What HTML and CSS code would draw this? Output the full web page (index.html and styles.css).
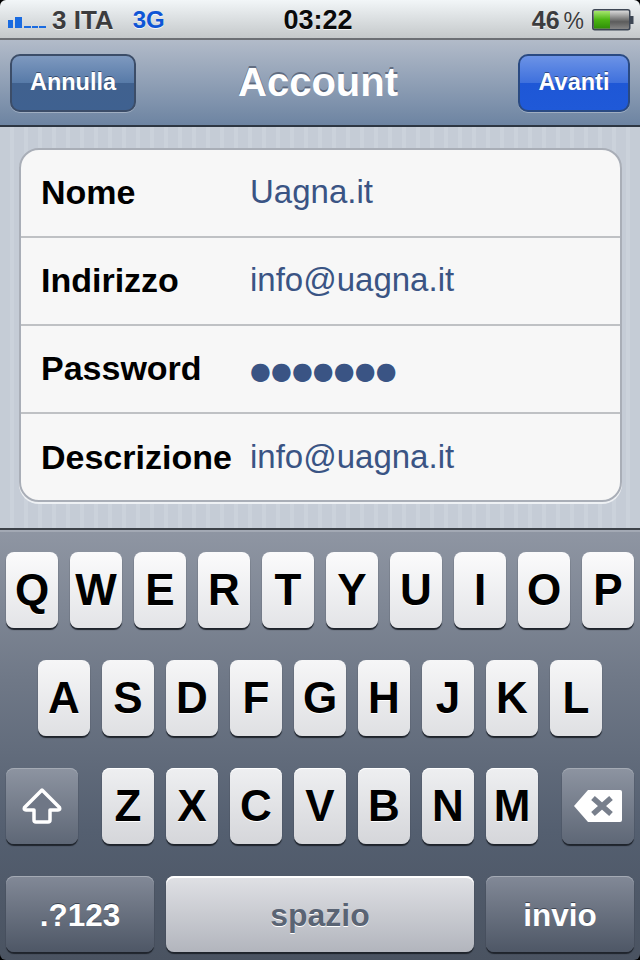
FILE: index.html
```html
<!DOCTYPE html>
<html lang="it">
<head>
    <meta charset="UTF-8">
    <meta name="viewport" content="width=device-width, initial-scale=1.0">
    <title>Account</title>
    <link rel="stylesheet" href="styles.css">
</head>
<body>
    <div class="screen">
        <div class="status-bar">
            <div class="status-left">
                <svg class="signal" width="40" height="20" viewBox="0 0 40 20">
                    <rect x="0" y="10" width="5" height="8" fill="#1a6be0"/>
                    <rect x="7" y="7" width="7" height="11" fill="#1a6be0"/>
                    <rect x="16" y="16" width="7" height="2" fill="#1a6be0"/>
                    <rect x="24" y="16" width="6" height="2" fill="#1a6be0"/>
                    <rect x="31" y="16" width="7" height="2" fill="#1a6be0"/>
                </svg>
                <span class="carrier">3 ITA</span>
                <span class="network">3G</span>
            </div>
            <div class="status-time">03:22</div>
            <div class="status-right">
                <span class="percent">46<span class="percent-sign">%</span></span>
                <svg class="battery" width="42" height="22" viewBox="0 0 42 22">
                    <defs>
                        <linearGradient id="charge" x1="0" y1="0" x2="0" y2="1">
                            <stop offset="0" stop-color="#a6e66e"/>
                            <stop offset="0.5" stop-color="#4bb512"/>
                            <stop offset="1" stop-color="#2f8f08"/>
                        </linearGradient>
                        <linearGradient id="empty" x1="0" y1="0" x2="0" y2="1">
                            <stop offset="0" stop-color="#e4e4e4"/>
                            <stop offset="0.6" stop-color="#5c5c5c"/>
                            <stop offset="1" stop-color="#8a8a8a"/>
                        </linearGradient>
                    </defs>
                    <rect x="0.75" y="0.75" width="37" height="20" rx="2" fill="url(#empty)" stroke="#3d4654" stroke-width="1.5"/>
                    <rect x="2" y="2" width="16" height="17.5" fill="url(#charge)"/>
                    <rect x="38" y="7" width="3.5" height="8" fill="#3d4654"/>
                </svg>
            </div>
        </div>

        <div class="nav-bar">
            <div class="nav-button cancel">Annulla</div>
            <div class="nav-title">Account</div>
            <div class="nav-button next">Avanti</div>
        </div>

        <div class="content">
            <div class="form-card">
                <div class="form-row">
                    <div class="form-label">Nome</div>
                    <div class="form-value">Uagna.it</div>
                </div>
                <div class="form-row">
                    <div class="form-label">Indirizzo</div>
                    <div class="form-value">info@uagna.it</div>
                </div>
                <div class="form-row">
                    <div class="form-label">Password</div>
                    <div class="form-value dots">●●●●●●●</div>
                </div>
                <div class="form-row">
                    <div class="form-label">Descrizione</div>
                    <div class="form-value">info@uagna.it</div>
                </div>
            </div>
        </div>

        <div class="keyboard">
            <div class="key-row">
                <div class="key">Q</div>
                <div class="key">W</div>
                <div class="key">E</div>
                <div class="key">R</div>
                <div class="key">T</div>
                <div class="key">Y</div>
                <div class="key">U</div>
                <div class="key">I</div>
                <div class="key">O</div>
                <div class="key">P</div>
            </div>
            <div class="key-row">
                <div class="key">A</div>
                <div class="key">S</div>
                <div class="key">D</div>
                <div class="key">F</div>
                <div class="key">G</div>
                <div class="key">H</div>
                <div class="key">J</div>
                <div class="key">K</div>
                <div class="key">L</div>
            </div>
            <div class="key-row third">
                <div class="key dark shift">
                    <svg width="42" height="38" viewBox="0 0 42 38">
                        <path d="M21 3 L38.5 20.5 Q39.5 23 37 23 L29 23 L29 33 Q29 35 27 35 L15 35 Q13 35 13 33 L13 23 L5 23 Q2.5 23 3.5 20.5 Z" fill="#6f7786" stroke="#fff" stroke-width="3.5" stroke-linejoin="round"/>
                    </svg>
                </div>
                <div class="letters">
                    <div class="key">Z</div>
                    <div class="key">X</div>
                    <div class="key">C</div>
                    <div class="key">V</div>
                    <div class="key">B</div>
                    <div class="key">N</div>
                    <div class="key">M</div>
                </div>
                <div class="key dark backspace">
                    <svg width="50" height="34" viewBox="0 0 50 34">
                        <path d="M15 1 L47 1 Q49 1 49 3 L49 31 Q49 33 47 33 L15 33 L1 17 Z" fill="#fff"/>
                        <path d="M20 9 L38 25 M38 9 L20 25" stroke="#787f8c" stroke-width="5.5" fill="none"/>
                    </svg>
                </div>
            </div>
            <div class="key-row bottom">
                <div class="key dark wide">.?123</div>
                <div class="key space">spazio</div>
                <div class="key dark wide">invio</div>
            </div>
        </div>
    </div>
</body>
</html>
```

FILE: styles.css
```css
html, body {
    margin: 0;
    padding: 0;
    background: #000;
}
.screen {
    width: 640px;
    height: 960px;
    display: flex;
    flex-direction: column;
    overflow: hidden;
    border-radius: 6px;
    font-family: "Liberation Sans", Arial, sans-serif;
}

/* status bar */
.status-bar {
    height: 40px;
    display: grid;
    grid-template-columns: 1fr auto 1fr;
    align-items: center;
    padding: 2px 6px 0 8px;
    box-sizing: border-box;
    background: linear-gradient(#f2f6f8, #c4c8ca);
    border-bottom: 2px solid #6c6f74;
    font-weight: bold;
    text-shadow: 0 1px 0 rgba(255, 255, 255, 0.8);
}
.status-left {
    display: flex;
    align-items: center;
}
.signal {
    margin-right: 4px;
}
.carrier {
    font-size: 26px;
    color: #3c3c3e;
    margin-right: 19px;
}
.network {
    font-size: 24px;
    color: #0e55d6;
}
.status-time {
    font-size: 27px;
    color: #0a0a0a;
    margin-right: 6px;
}
.status-right {
    display: flex;
    align-items: center;
    justify-content: flex-end;
    gap: 8px;
}
.percent {
    font-size: 25px;
    color: #3c3c3e;
}
.percent-sign {
    font-size: 23px;
    font-weight: normal;
    margin-left: 4px;
}

/* nav bar */
.nav-bar {
    height: 87px;
    box-sizing: border-box;
    display: grid;
    grid-template-columns: 1fr auto 1fr;
    align-items: center;
    padding: 0 10px;
    background: linear-gradient(#b2bbc9, #6d84a2);
    border-bottom: 2px solid #2d3642;
}
.nav-title {
    font-size: 40px;
    font-weight: bold;
    color: #fff;
    margin-right: 4px;
    text-shadow: 0 -2px 0 rgba(60, 70, 90, 0.6);
}
.nav-button {
    height: 58px;
    box-sizing: border-box;
    display: flex;
    align-items: center;
    justify-content: center;
    border-radius: 10px;
    font-size: 23.5px;
    font-weight: bold;
    color: #fff;
    text-shadow: 0 -1px 0 rgba(30, 40, 60, 0.6);
    box-shadow: 0 1px 0 rgba(255, 255, 255, 0.3);
}
.cancel {
    width: 126px;
    border: 2px solid #3c4d68;
    background: linear-gradient(#7e99bf 0%, #577aa8 50%, #40618f 50%, #3f6190 100%);
}
.next {
    width: 112px;
    justify-self: end;
    border: 2px solid #2a4a82;
    background: linear-gradient(#6c93e6 0%, #3e70dd 50%, #1e57d6 50%, #1f59d8 100%);
}

/* form */
.content {
    height: 401px;
    box-sizing: border-box;
    padding: 21px 18px 0 19px;
    background: repeating-linear-gradient(90deg, #c5ccd6 0, #c5ccd6 10px, #cbd2db 10px, #cbd2db 14px);
}
.form-card {
    background: #f7f7f7;
    border: 2px solid #a9aeb7;
    border-radius: 20px;
    box-shadow: 0 2px 0 #eef1f4;
    overflow: hidden;
    box-sizing: border-box;
    height: 354px;
}
.form-row {
    height: 88px;
    box-sizing: border-box;
    display: flex;
    align-items: center;
    border-bottom: 2px solid #bfc1c4;
    padding-left: 20px;
    padding-bottom: 2px;
}
.form-row:last-child {
    border-bottom: none;
}
.form-label {
    width: 209px;
    font-size: 34px;
    font-weight: bold;
    color: #000;
    white-space: nowrap;
}
.form-value {
    font-size: 33px;
    color: #3a5484;
}
.dots {
    font-family: "DejaVu Sans", sans-serif;
    font-size: 24px;
    line-height: 40px;
    margin-top: 5px;
}

/* keyboard */
.keyboard {
    flex: 1;
    box-sizing: border-box;
    padding: 22px 6px 0;
    display: flex;
    flex-direction: column;
    gap: 32px;
    background: linear-gradient(#8f96a3 0%, #6f7887 35%, #545f70 70%, #4a5361 100%);
    border-top: 2px solid #3d4249;
    box-shadow: inset 0 2px 0 #a3a9b4;
}
.key-row {
    display: flex;
    justify-content: center;
    gap: 12px;
    height: 76px;
}
.letters {
    display: flex;
    gap: 12px;
}
.third {
    justify-content: space-between;
}
.bottom {
    justify-content: space-between;
}
.key {
    width: 52px;
    height: 76px;
    box-sizing: border-box;
    display: flex;
    align-items: center;
    justify-content: center;
    border-radius: 8px;
    background: linear-gradient(#fbfbfc, #e3e4e7);
    box-shadow: 0 2px 1px #1f242c;
    font-size: 44px;
    font-weight: bold;
    color: #000;
    text-shadow: 0 1px 0 #fff;
}
.key-row:nth-child(2) .key {
    background: linear-gradient(#f6f6f7, #dfe0e3);
}
.third .key {
    background: linear-gradient(#eeeff1, #d5d6da);
    box-shadow: 0 2px 1px #1f242c, inset 0 1px 0 #fff;
}
.third .dark, .dark {
    width: 72px;
    background: linear-gradient(#8d94a1, #5e6776);
    box-shadow: 0 2px 1px #1f242c, inset 0 1px 0 #a4aab4;
    color: #fff;
    text-shadow: 0 -1px 0 #3d4553;
}
.wide {
    width: 148px;
    font-size: 31.5px;
    padding-top: 2px;
    background: linear-gradient(#828997, #4e5766);
}
.space {
    width: 308px;
    font-size: 32px;
    padding-top: 2px;
    color: #5a6474;
    background: linear-gradient(#e0e1e5, #b2b5bd);
    box-shadow: 0 2px 1px #1f242c, inset 0 2px 0 #fff;
}
```
